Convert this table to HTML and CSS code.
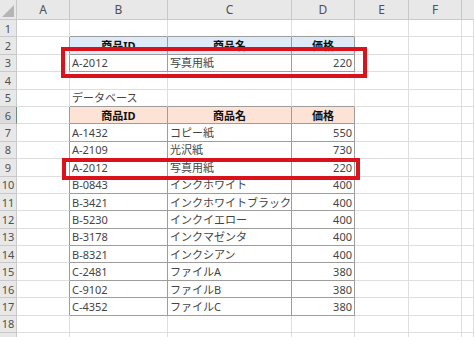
FILE: index.html
```html
<!DOCTYPE html>
<html lang="ja">
<head>
<meta charset="utf-8">
<link rel="stylesheet" href="styles.css">
</head>
<body>
<div class="sheet">
  <div class="corner"><span class="tri"></span></div><div class="hd">A</div><div class="hd">B</div><div class="hd">C</div><div class="hd">D</div><div class="hd">E</div><div class="hd">F</div><div class="hd last"></div>

  <div class="rh">1</div><div class="c"></div><div class="c tb"></div><div class="c tb"></div><div class="c tb"></div><div class="c"></div><div class="c"></div><div class="c"></div>
  <div class="rh">2</div><div class="c tl"></div><div class="c t th1">商品ID</div><div class="c t th1">商品名</div><div class="c t th1">価格</div><div class="c"></div><div class="c"></div><div class="c"></div>
  <div class="rh">3</div><div class="c tl"></div><div class="c t">A-2012</div><div class="c t">写真用紙</div><div class="c t num">220</div><div class="c"></div><div class="c"></div><div class="c"></div>
  <div class="rh">4</div><div class="c"></div><div class="c"></div><div class="c"></div><div class="c"></div><div class="c"></div><div class="c"></div><div class="c"></div>
  <div class="rh">5</div><div class="c"></div><div class="c tb">データベース</div><div class="c tb"></div><div class="c tb"></div><div class="c"></div><div class="c"></div><div class="c"></div>
  <div class="rh sel">6</div><div class="c tl"></div><div class="c t th2">商品ID</div><div class="c t th2">商品名</div><div class="c t th2">価格</div><div class="c"></div><div class="c"></div><div class="c"></div>
  <div class="rh">7</div><div class="c tl"></div><div class="c t">A-1432</div><div class="c t">コピー紙</div><div class="c t num">550</div><div class="c"></div><div class="c"></div><div class="c"></div>
  <div class="rh">8</div><div class="c tl"></div><div class="c t">A-2109</div><div class="c t">光沢紙</div><div class="c t num">730</div><div class="c"></div><div class="c"></div><div class="c"></div>
  <div class="rh">9</div><div class="c tl"></div><div class="c t">A-2012</div><div class="c t">写真用紙</div><div class="c t num">220</div><div class="c"></div><div class="c"></div><div class="c"></div>
  <div class="rh">10</div><div class="c tl"></div><div class="c t">B-0843</div><div class="c t">インクホワイト</div><div class="c t num">400</div><div class="c"></div><div class="c"></div><div class="c"></div>
  <div class="rh">11</div><div class="c tl"></div><div class="c t">B-3421</div><div class="c t">インクホワイトブラック</div><div class="c t num">400</div><div class="c"></div><div class="c"></div><div class="c"></div>
  <div class="rh">12</div><div class="c tl"></div><div class="c t">B-5230</div><div class="c t">インクイエロー</div><div class="c t num">400</div><div class="c"></div><div class="c"></div><div class="c"></div>
  <div class="rh">13</div><div class="c tl"></div><div class="c t">B-3178</div><div class="c t">インクマゼンタ</div><div class="c t num">400</div><div class="c"></div><div class="c"></div><div class="c"></div>
  <div class="rh">14</div><div class="c tl"></div><div class="c t">B-8321</div><div class="c t">インクシアン</div><div class="c t num">400</div><div class="c"></div><div class="c"></div><div class="c"></div>
  <div class="rh">15</div><div class="c tl"></div><div class="c t">C-2481</div><div class="c t">ファイルA</div><div class="c t num">380</div><div class="c"></div><div class="c"></div><div class="c"></div>
  <div class="rh">16</div><div class="c tl"></div><div class="c t">C-9102</div><div class="c t">ファイルB</div><div class="c t num">380</div><div class="c"></div><div class="c"></div><div class="c"></div>
  <div class="rh">17</div><div class="c tl"></div><div class="c t">C-4352</div><div class="c t">ファイルC</div><div class="c t num">380</div><div class="c"></div><div class="c"></div><div class="c"></div>
  <div class="rh">18</div><div class="c"></div><div class="c"></div><div class="c"></div><div class="c"></div><div class="c"></div><div class="c"></div><div class="c"></div>
  <div class="rh"></div><div class="c"></div><div class="c"></div><div class="c"></div><div class="c"></div><div class="c"></div><div class="c"></div><div class="c"></div>

  <div class="mark mark1"></div>
  <div class="mark mark2"></div>
</div>
</body>
</html>
```
FILE: styles.css
```css
html, body {
  margin: 0;
  padding: 0;
  background: #ffffff;
}
.sheet {
  position: relative;
  display: grid;
  grid-template-columns: 17px 53px 98px 124px 63px 54px 53px 1fr;
  grid-template-rows: 20px repeat(19, 17.4px);
  width: 474px;
  height: 337px;
  overflow: hidden;
  font-family: "Noto Sans", "Noto Sans CJK JP", sans-serif;
  font-size: 11px;
  color: #444444;
}
.sheet > div {
  box-sizing: border-box;
}
.c {
  border-right: 1px solid #dedede;
  border-bottom: 1px solid #dedede;
  display: flex;
  align-items: center;
  padding: 0 2px;
  white-space: nowrap;
  overflow: hidden;
  line-height: 1;
}
.hd, .rh, .corner {
  background: #e8e8e8;
  border-right: 1px solid #c9c9c9;
  border-bottom: 1px solid #c9c9c9;
  color: #505050;
  display: flex;
  align-items: center;
  justify-content: center;
  font-size: 11px;
  line-height: 1;
}
.hd {
  font-size: 12px;
  padding-top: 1px;
}
.hd.last {
  border-right: none;
}
.rh {
  font-size: 11px;
}
.rh.sel {
  background: #dcdcdc;
  border-right: 1px solid #6f8f7c;
}
.corner {
  position: relative;
}
.tri {
  width: 0;
  height: 0;
  border-left: 12px solid transparent;
  border-bottom: 12px solid #b5b5b5;
  position: absolute;
  right: 2px;
  bottom: 2px;
}
.t {
  border-right-color: #9d9d9d;
  border-bottom-color: #9d9d9d;
}
.tl {
  border-right-color: #9d9d9d;
}
.tb {
  border-bottom-color: #9d9d9d;
}
.th1, .th2 {
  justify-content: center;
  font-weight: bold;
  color: #111;
}
.th1 {
  background: #dcebf7;
}
.th2 {
  background: #fce3d5;
}
.num {
  justify-content: flex-end;
}
.mark {
  position: absolute;
  box-sizing: border-box;
  border: 4px solid #d9121c;
}
.mark1 {
  left: 61px;
  top: 47px;
  width: 306px;
  height: 31px;
}
.mark2 {
  left: 62px;
  top: 158px;
  width: 298px;
  height: 22px;
}
```
